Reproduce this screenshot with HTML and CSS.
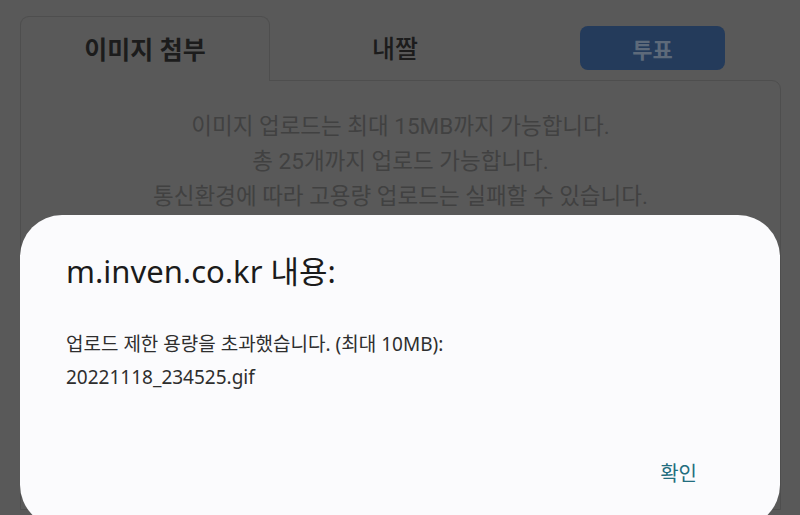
FILE: index.html
```html
<!DOCTYPE html>
<html lang="ko">
<head>
    <meta charset="UTF-8">
    <meta name="viewport" content="width=device-width, initial-scale=1.0">
    <title>이미지 첨부</title>
    <link rel="stylesheet" href="styles.css">
</head>
<body>

<div class="page">
    <div class="tabs">
        <div class="tab active">이미지 첨부</div>
        <div class="tab">내짤</div>
        <button class="vote">투표</button>
    </div>
    <div class="panel">
        <p>이미지 업로드는 최대 15MB까지 가능합니다.</p>
        <p>총 25개까지 업로드 가능합니다.</p>
        <p>통신환경에 따라 고용량 업로드는 실패할 수 있습니다.</p>
    </div>
</div>

<!-- alert dialog -->
<div class="dialog">
    <div class="dialog-title">m.inven.co.kr 내용:</div>
    <div class="dialog-body">
        업로드 제한 용량을 초과했습니다. (최대 10MB):<br>
        20221118_234525.gif
    </div>
    <div class="dialog-actions">
        <button class="ok">확인</button>
    </div>
</div>

</body>
</html>
```

FILE: styles.css
```css
body {
    margin: 0;
    height: 515px;
    overflow: hidden;
    background-color: #595959;
    font-family: 'Noto Sans', 'Noto Sans CJK KR', sans-serif;
}

.page {
    padding: 16px 19px 0 20px;
}

/* Tabs */
.tabs {
    display: flex;
    align-items: flex-start;
    height: 64px;
}

.tab {
    width: 250px;
    height: 64px;
    box-sizing: border-box;
    display: flex;
    align-items: center;
    justify-content: center;
    padding-bottom: 3px;
    font-size: 25px;
    font-weight: 500;
    color: #1c1c1c;
}

.tab.active {
    font-weight: 700;
    border: 1px solid #4e4e4e;
    border-bottom: none;
    border-radius: 9px 9px 0 0;
    background-color: #595959;
    height: 65px;
    position: relative;
    z-index: 1;
}

.vote {
    margin: 10px 0 0 60px;
    width: 145px;
    height: 44px;
    border: none;
    border-radius: 8px;
    background-color: #243b5b;
    color: #5d6a7a;
    font-family: inherit;
    font-size: 22px;
    font-weight: 700;
}

/* Content panel */
.panel {
    border: 1px solid #4e4e4e;
    border-radius: 0 9px 0 0;
    height: 400px;
    padding-top: 28px;
    text-align: center;
}

.panel p {
    margin: 0;
    font-family: 'Roboto', 'Noto Sans CJK KR', sans-serif;
    font-size: 22.5px;
    line-height: 35px;
    color: #414141;
}

/* Dialog */
.dialog {
    position: absolute;
    left: 20px;
    top: 215px;
    width: 760px;
    height: 312px;
    box-sizing: border-box;
    padding: 35px 83px 0 46px;
    background-color: #fbfbfd;
    border-radius: 42px;
}

.dialog-title {
    font-size: 31px;
    line-height: 42px;
    color: #1b1b1b;
}

.dialog-body {
    margin-top: 36px;
    font-size: 19px;
    line-height: 33px;
    color: #2e2e2e;
}

.dialog-actions {
    display: flex;
    justify-content: flex-end;
    margin-top: 64px;
}

.ok {
    border: none;
    background: none;
    padding: 0;
    font-family: inherit;
    font-size: 20px;
    font-weight: 400;
    color: #226d7e;
}
```
